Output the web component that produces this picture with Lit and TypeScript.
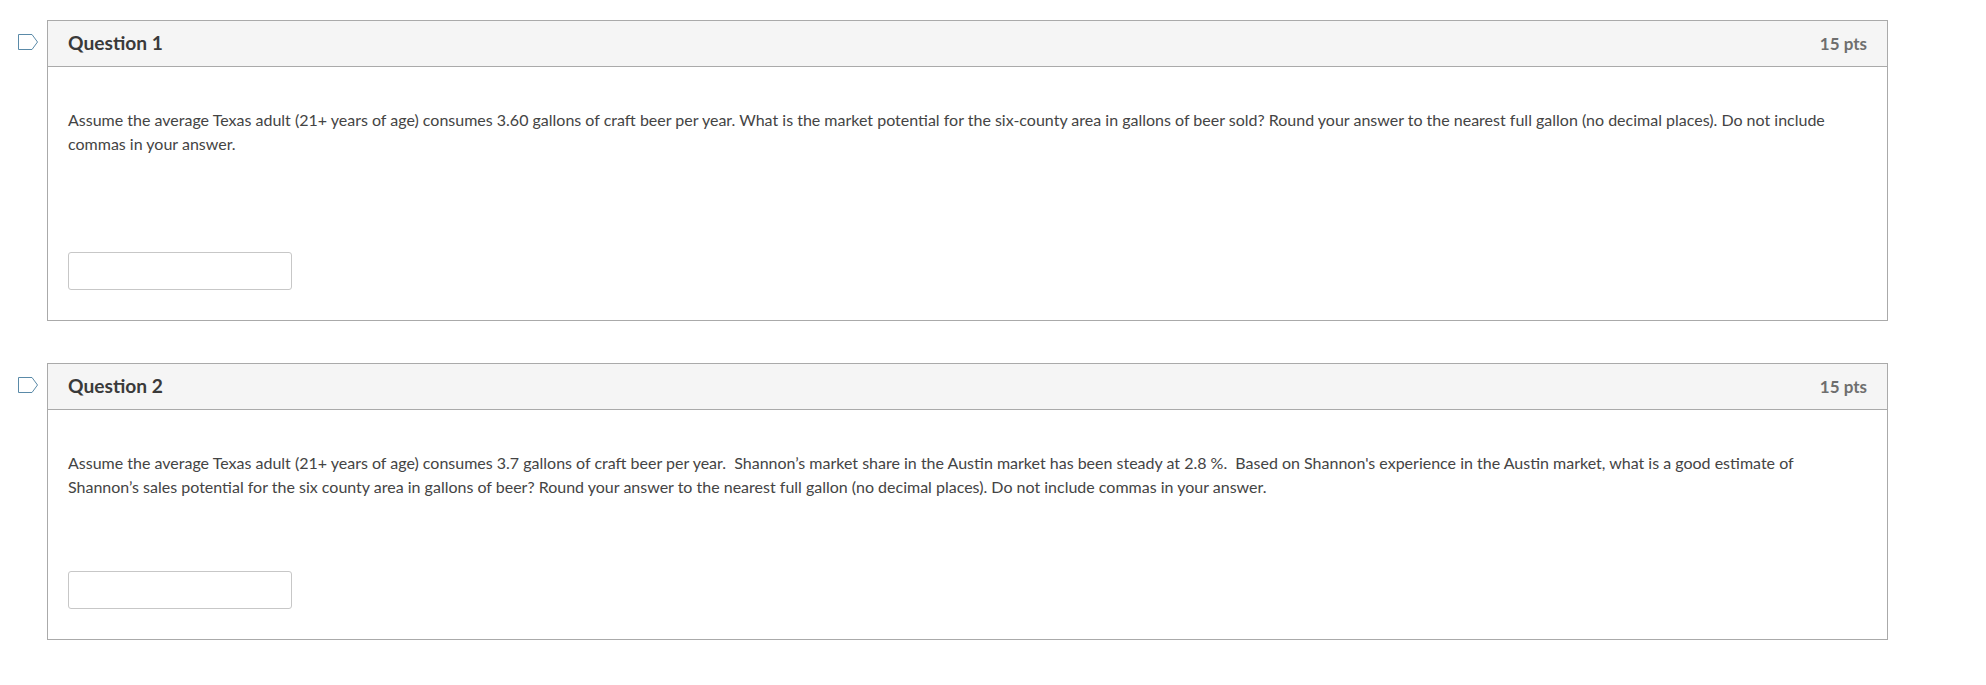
import { LitElement, css, html } from "lit";
import { customElement } from "lit/decorators.js";

const QUESTIONS = [
  {
    title: "Question 1",
    points: "15 pts",
    text: "Assume the average Texas adult (21+ years of age) consumes 3.60 gallons of craft beer per year. What is the market potential for the six-county area in gallons of beer sold? Round your answer to the nearest full gallon (no decimal places). Do not include commas in your answer.",
    gap: 96,
  },
  {
    title: "Question 2",
    points: "15 pts",
    text: "Assume the average Texas adult (21+ years of age) consumes 3.7 gallons of craft beer per year.\u00a0 Shannon\u2019s market share in the Austin market has been steady at 2.8 %.\u00a0 Based on Shannon's experience in the Austin market, what is a good estimate of Shannon\u2019s sales potential for the six county area in gallons of beer? Round your answer to the nearest full gallon (no decimal places). Do not include commas in your answer.",
    gap: 72,
  },
];

@customElement("app-root")
export class AppRoot extends LitElement {
  static styles = css`
    :host {
      display: block;
      height: 685px;
      background: #fff;
      font-family: Lato, "Liberation Sans", sans-serif;
      color: #2d3b45;
    }

    .page {
      display: flex;
      flex-direction: column;
      gap: 42px;
      padding: 20px 0 0 18px;
      width: 1888px;
      box-sizing: border-box;
    }

    .row {
      display: flex;
      align-items: flex-start;
    }

    .flag {
      display: flex;
      width: 29px;
      height: 44px;
      align-items: center;
      flex: none;
    }

    .flag svg {
      display: block;
      flex: none;
    }

    .card {
      flex: 1;
      min-width: 0;
      border: 1px solid #aaa;
      box-sizing: border-box;
    }

    .header {
      display: flex;
      justify-content: space-between;
      align-items: center;
      height: 43px;
      padding: 0 20px 2px;
      background: #f5f5f5;
      border-bottom: 1px solid #aaa;
    }

    .title {
      font-size: 19.2px;
      font-weight: 700;
      color: #3a3a3a;
    }

    .points {
      margin-top: 2px;
      font-size: 17px;
      font-weight: 700;
      color: #6e6e6e;
    }

    .body {
      padding: 41px 20px 30px;
    }

    .text {
      margin: 0;
      font-size: 16px;
      line-height: 24px;
      color: #444;
    }

    input {
      display: block;
      width: 224px;
      height: 38px;
      padding: 0;
      box-sizing: border-box;
      background: #fff;
      border: 1px solid #c7c7c7;
      border-radius: 3px;
    }
  `;

  render() {
    return html`<div class="page">
      ${QUESTIONS.map(
        (q) => html`<div class="row">
          <div class="flag">
            <svg width="20" height="16" viewBox="0 0 20 16">
              <path d="M.5.5h13.5l5.5 7.5-5.5 7.5H.5z" fill="none" stroke="#5a8aa8" />
            </svg>
          </div>
          <div class="card">
            <div class="header">
              <span class="title">${q.title}</span>
              <span class="points">${q.points}</span>
            </div>
            <div class="body">
              <p class="text" style="margin-bottom: ${q.gap}px">${q.text}</p>
              <input type="text" />
            </div>
          </div>
        </div>`
      )}
    </div>`;
  }
}
